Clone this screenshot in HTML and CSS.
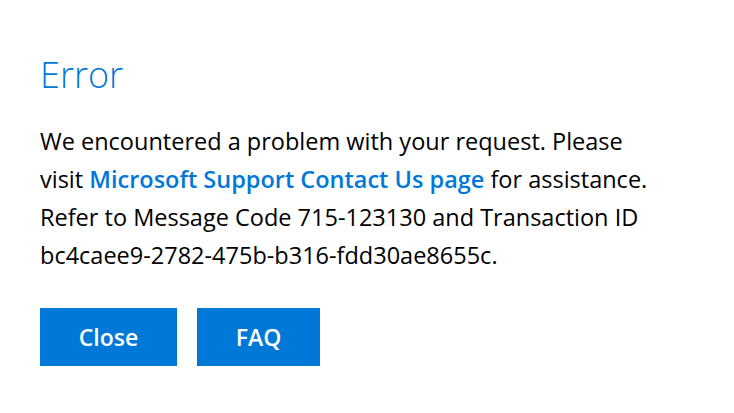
FILE: index.html
```html
<!DOCTYPE html>
<html>
<head>
<meta charset="utf-8">
<link rel="stylesheet" href="styles.css">
</head>
<body>
<main class="dialog">
  <h1 class="title">Error</h1>
  <p class="message">We encountered a problem with your request. Please visit <a class="link" href="#">Microsoft Support Contact Us page</a> for assistance. Refer to Message Code 715-123130 and Transaction ID bc4caee9-2782-475b-b316-fdd30ae8655c.</p>
  <div class="actions">
    <button class="btn btn-close">Close</button>
    <button class="btn btn-faq">FAQ</button>
  </div>
</main>
</body>
</html>
```
FILE: styles.css
```css
html, body {
  margin: 0;
  padding: 0;
  background: #ffffff;
}
body {
  font-family: "Open Sans", "Noto Sans", sans-serif;
  color: #000000;
}
.dialog {
  padding: 52px 40px 0 40px;
  width: 650px;
}
.title {
  margin: 0;
  font-size: 36px;
  font-weight: 300;
  line-height: 46px;
  color: #0078d7;
}
.message {
  margin: 24px 0 0 0;
  font-size: 23.5px;
  line-height: 38px;
  max-width: 616px;
}
.link {
  color: #0078d7;
  font-weight: 600;
  text-decoration: none;
}
.actions {
  display: flex;
  gap: 20px;
  margin-top: 34px;
}
.btn {
  height: 58px;
  border: none;
  background: #0078d7;
  color: #ffffff;
  font-family: inherit;
  font-size: 23px;
  font-weight: 600;
  padding: 0;
}
.btn-close { width: 137px; }
.btn-faq { width: 123px; }
```
